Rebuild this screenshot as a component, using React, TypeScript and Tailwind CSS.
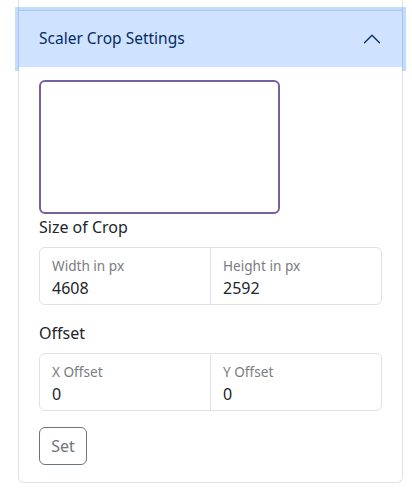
import React from "react";

function Field({ label, value, left }: { label: string; value: string; left: boolean }) {
  return (
    <div
      className={
        "flex-1 h-[58px] border border-[#dee2e6] bg-white flex flex-col pl-[12px] " +
        (left ? "rounded-l-[6px]" : "rounded-r-[6px] -ml-px")
      }
    >
      <div className="mt-[9px] text-[13.6px] leading-[18px] text-[#7a7c7f]">{label}</div>
      <div className="mt-[2px] text-[16px] leading-[22px] text-[#212529]">{value}</div>
    </div>
  );
}

export default function App() {
  return (
    <div
      className="w-[412px] h-[490px] bg-white pl-[18px] pr-[9px] overflow-hidden"
      style={{ fontFamily: '"Segoe UI", "Noto Sans", "Open Sans", sans-serif' }}
    >
      <div className="border-x border-b border-[#dee2e6] rounded-b-[6px]">
        <div className="h-[11px] border-b border-[#dee2e6]" />
        <div className="relative z-10 h-[56px] bg-[#cfe2ff] shadow-[0_0_0_4px_rgba(13,110,253,0.25)] flex items-center justify-between pl-[20px] pr-[20px]">
          <span className="text-[15.5px] text-[#052c65]">Scaler Crop Settings</span>
          <svg width="20" height="20" viewBox="0 0 16 16" fill="none" stroke="#052c65" strokeLinecap="round" strokeLinejoin="round" strokeWidth="1">
            <path d="M2 11L8 5L14 11" />
          </svg>
        </div>
        <div className="relative z-20 bg-white rounded-b-[6px] pt-[13px] pb-[17px] px-[20px]">
          <div className="w-[241px] h-[134px] border-2 border-[#76609d] rounded-[6px] bg-white" />
          <div className="mt-[1px] text-[16px] leading-[24px] text-[#212529]">Size of Crop</div>
          <div className="mt-[8px] flex">
            <Field label="Width in px" value="4608" left />
            <Field label="Height in px" value="2592" left={false} />
          </div>
          <div className="mt-[16px] text-[16px] leading-[24px] text-[#212529]">Offset</div>
          <div className="mt-[8px] flex">
            <Field label="X Offset" value="0" left />
            <Field label="Y Offset" value="0" left={false} />
          </div>
          <button className="mt-[16px] h-[38px] w-[48px] border border-[#6c757d] rounded-[6px] text-[16px] text-[#6c757d] bg-white">
            Set
          </button>
        </div>
      </div>
    </div>
  );
}
